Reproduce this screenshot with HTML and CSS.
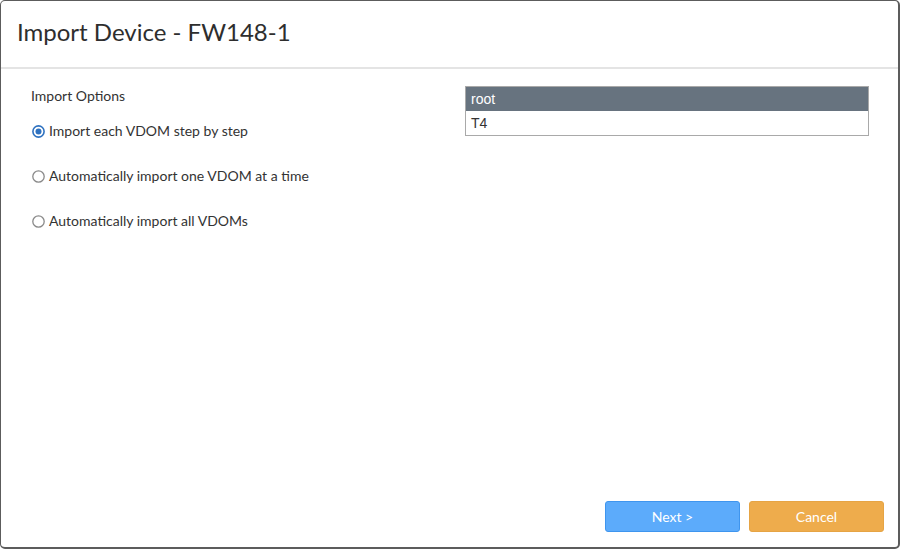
FILE: index.html
```html
<!DOCTYPE html>
<html>
<head>
<meta charset="utf-8">
<link rel="stylesheet" href="styles.css">
</head>
<body>
<div class="dialog">
  <div class="header">
    <h1 class="title">Import Device - FW148-1</h1>
  </div>
  <div class="content">
    <div class="options">
      <div class="label">Import Options</div>
      <div class="radios">
        <label class="radio">
          <svg class="radio-icon" width="13" height="13" viewBox="0 0 13 13"><circle cx="6.5" cy="6.5" r="5.6" fill="#fff" stroke="#2f72c0" stroke-width="1.6"/><circle cx="6.5" cy="6.5" r="3" fill="#2f72c0"/></svg>
          <span>Import each VDOM step by step</span>
        </label>
        <label class="radio">
          <svg class="radio-icon" width="13" height="13" viewBox="0 0 13 13"><circle cx="6.5" cy="6.5" r="5.7" fill="#fff" stroke="#8a8a8a" stroke-width="1.3"/></svg>
          <span>Automatically import one VDOM at a time</span>
        </label>
        <label class="radio">
          <svg class="radio-icon" width="13" height="13" viewBox="0 0 13 13"><circle cx="6.5" cy="6.5" r="5.7" fill="#fff" stroke="#8a8a8a" stroke-width="1.3"/></svg>
          <span>Automatically import all VDOMs</span>
        </label>
      </div>
    </div>
    <div class="vdom-list">
      <div class="vdom-item selected">root</div>
      <div class="vdom-item">T4</div>
    </div>
  </div>
  <div class="footer">
    <button class="btn btn-next">Next &gt;</button>
    <button class="btn btn-cancel">Cancel</button>
  </div>
</div>
</body>
</html>
```
FILE: styles.css
```css
* { box-sizing: border-box; }
html, body {
  margin: 0;
  padding: 0;
  background: #fff;
}
body {
  width: 900px;
  height: 549px;
  font-family: Lato, "Open Sans", sans-serif;
  color: #333;
}
.dialog {
  width: 900px;
  height: 549px;
  border: 1px solid #5c5c5c;
  border-right-width: 2px;
  border-bottom-width: 2px;
  border-radius: 5px;
  display: flex;
  flex-direction: column;
  background: #fff;
}
.header {
  height: 68px;
  border-bottom: 2px solid #e4e4e4;
  padding: 0 16px;
  display: flex;
  align-items: center;
}
.title {
  margin: 0;
  font-size: 24px;
  font-weight: 400;
  color: #2e2e2e;
  line-height: 1;
  padding-bottom: 4px;
}
.content {
  flex: 1;
  display: flex;
  justify-content: space-between;
  padding: 17px 29px 0 30px;
}
.options {
  display: flex;
  flex-direction: column;
}
.label {
  font-size: 14px;
  line-height: 20px;
}
.radios {
  display: flex;
  flex-direction: column;
  gap: 25px;
  margin-top: 15px;
}
.radio {
  display: flex;
  align-items: center;
  gap: 4px;
  font-size: 14px;
  line-height: 20px;
  padding-left: 1px;
}
.radio-icon { display: block; flex: none; }
.vdom-list {
  width: 404px;
  align-self: flex-start;
  border: 1px solid #a9a9a9;
  font-family: "Liberation Sans", Arial, sans-serif;
  font-size: 14px;
}
.vdom-item {
  height: 24px;
  line-height: 24px;
  padding-left: 5px;
  color: #333;
}
.vdom-item.selected {
  background: #67737f;
  color: #fff;
}
.footer {
  display: flex;
  justify-content: flex-end;
  gap: 9px;
  padding: 0 14px 15px 0;
}
.btn {
  width: 135px;
  height: 31px;
  border-radius: 3px;
  font-family: Lato, "Open Sans", sans-serif;
  font-size: 14px;
  color: #fff;
  border: 1px solid;
  padding: 0;
}
.btn-next {
  background: #5cabfb;
  border-color: #3f95ee;
}
.btn-cancel {
  background: #eeac4c;
  border-color: #e6a444;
}
```
